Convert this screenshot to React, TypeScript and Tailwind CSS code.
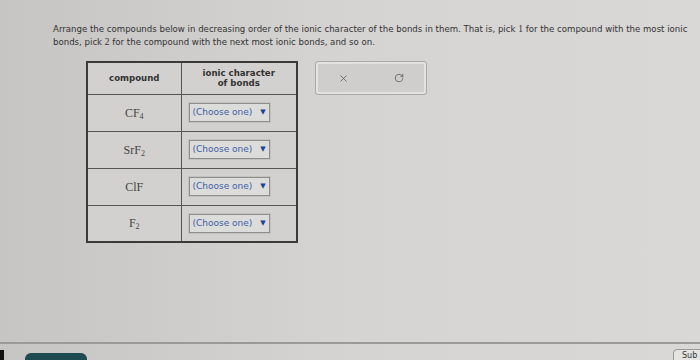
import { X, RotateCcw } from 'lucide-react';

const ROWS = [
  { base: 'CF', sub: '4' },
  { base: 'SrF', sub: '2' },
  { base: 'ClF', sub: '' },
  { base: 'F', sub: '2' },
];

function Choose() {
  return (
    <div className="flex items-center gap-[8px] h-[19px] px-[3px] border border-[#8e8e8c] bg-[#dcdcda] text-[#4060a8] text-[9px] shadow-[0_0_0_1px_#c2c2c0]">
      <span>(Choose one)</span>
      <span className="text-[#1f3f9a] text-[7px]">▼</span>
    </div>
  );
}

export default function App() {
  return (
    <div
      className="w-[700px] h-[360px] overflow-hidden relative bg-gradient-to-r from-[#c6c5c3] via-[#d5d4d2] to-[#d9d8d6] text-[#2a2a2a]"
      style={{ fontFamily: '"DejaVu Sans", Verdana, sans-serif' }}
    >
      <div className="pl-[53px] pr-[12px] pt-[23px] text-[8.6px] leading-[13px] text-[#333]">
        Arrange the compounds below in decreasing order of the ionic character of the bonds in them. That is, pick{' '}
        <span className="text-[9.5px] leading-[10px]" style={{ fontFamily: '"Liberation Serif", serif' }}>1</span> for the
        compound with the most ionic bonds, pick{' '}
        <span className="text-[9.5px] leading-[10px]" style={{ fontFamily: '"Liberation Serif", serif' }}>2</span> for the
        compound with the next most ionic bonds, and so on.
      </div>

      <div className="flex items-start gap-[17px] pl-[86px] pt-[12px]">
        <table className="border-collapse border-2 border-[#3a3a3a] bg-[#d2d1cf]">
          <thead>
            <tr className="h-[32px]">
              <th className="w-[94px] border border-[#555] text-[8.6px] font-bold text-[#333]">compound</th>
              <th className="w-[116px] border border-[#555] text-[8.6px] font-bold text-[#333] leading-[10px]">
                ionic character
                <br />
                of bonds
              </th>
            </tr>
          </thead>
          <tbody>
            {ROWS.map((r) => (
              <tr key={r.base} className="h-[37px]">
                <td
                  className="border border-[#555] text-center text-[12px] text-[#444]"
                  style={{ fontFamily: '"Liberation Serif", serif' }}
                >
                  {r.base}
                  {r.sub && <sub className="text-[8px]">{r.sub}</sub>}
                </td>
                <td className="border border-[#555] pl-[7px]">
                  <div className="w-fit">
                    <Choose />
                  </div>
                </td>
              </tr>
            ))}
          </tbody>
        </table>

        <div className="w-[112px] h-[34px] rounded-[3px] border border-[#a9a9a7] bg-[#cfcecc] shadow-[inset_0_0_0_2px_#e2e2e0] flex items-center justify-around">
          <X size={11} strokeWidth={1.6} className="text-[#555]" />
          <RotateCcw size={10} strokeWidth={1.8} className="text-[#555] -scale-x-100" />
        </div>
      </div>

      <div className="absolute left-0 right-0 top-[342px] h-[2px] bg-[#9a9a98]" />
      <div className="absolute left-[25px] top-[353px] w-[62px] h-[20px] rounded-[6px] bg-[#1e4a52]" />
      <div className="absolute left-[673px] top-[349px] w-[40px] h-[20px] rounded-[4px] border border-[#999] bg-[#e4e4e2] text-[8px] pl-[8px] pt-[1px] leading-[10px] text-[#333]">
        Sub
      </div>
      <div className="absolute left-0 top-[350px] w-[4px] h-[10px] bg-[#111]" />
    </div>
  );
}
